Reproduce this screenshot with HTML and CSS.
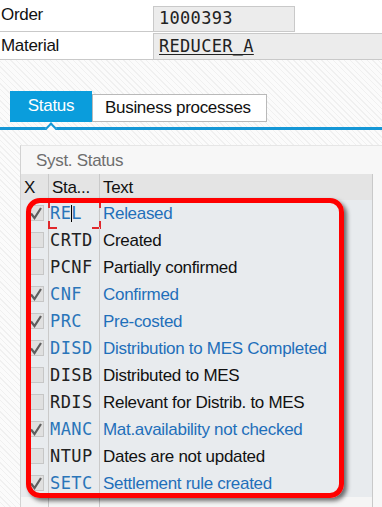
FILE: index.html
```
<!DOCTYPE html>
<html lang="en">
<head>
  <meta charset="UTF-8">
  <meta name="viewport" content="width=device-width, initial-scale=1.0">
  <title>Order Status</title>
  <link rel="stylesheet" href="styles.css">
</head>
<body>
  <div class="fields">
    <div class="field-row">
      <label class="field-label">Order</label>
      <div class="field-value short">1000393</div>
    </div>
    <div class="field-row wide">
      <label class="field-label">Material</label>
      <div class="field-value long"><u>REDUCER_A</u></div>
    </div>
  </div>

  <div class="stage">
    <div class="tabs">
      <div class="tab active">Status</div>
      <div class="tab">Business processes</div>
    </div>
    <div class="tab-line"></div>

    <div class="panel">
      <div class="panel-title">Syst. Status</div>
      <div class="grid">
        <div class="grid-head">
          <div class="cell">X</div>
          <div class="cell">Sta...</div>
          <div class="cell">Text</div>
        </div>
        <div id="rows"></div>
        <div class="grid-fill">
          <div class="cell"></div>
          <div class="cell"></div>
          <div class="cell"></div>
        </div>
        <div class="highlight"></div>
      </div>
    </div>
  </div>

  <script>
    const statuses = [
      ['REL', 'Released', true],
      ['CRTD', 'Created', false],
      ['PCNF', 'Partially confirmed', false],
      ['CNF', 'Confirmed', true],
      ['PRC', 'Pre-costed', true],
      ['DISD', 'Distribution to MES Completed', true],
      ['DISB', 'Distributed to MES', false],
      ['RDIS', 'Relevant for Distrib. to MES', false],
      ['MANC', 'Mat.availability not checked', true],
      ['NTUP', 'Dates are not updated', false],
      ['SETC', 'Settlement rule created', true]
    ];

    const tick = '<svg width="14" height="14" viewBox="0 0 14 14"><path d="M2 7.5 L5.5 12 L12 2" fill="none" stroke="#5e5e5e" stroke-width="2.2"/></svg>';
    const focus = '<svg class="focus" width="53" height="29" viewBox="0 0 53 29">' +
      '<path d="M1 8 V1 H8 M45 1 H52 V8 M1 21 V28 H9 M44 28 H52 V21" fill="none" stroke="#e0282c" stroke-width="2"/></svg>' +
      '<span class="caret"></span>';

    const rows = document.getElementById('rows');
    statuses.forEach(([code, text, active], i) => {
      const row = document.createElement('div');
      row.className = 'grid-row' + (active ? ' on' : '');
      row.innerHTML =
        '<div class="cell"><span class="check">' + (active ? tick : '') + '</span></div>' +
        '<div class="cell code">' + code + (i === 0 ? focus : '') + '</div>' +
        '<div class="cell">' + text + '</div>';
      rows.appendChild(row);
    });
  </script>
</body>
</html>
```

FILE: styles.css
```
* {
  box-sizing: border-box;
}
body {
  margin: 0;
  font-family: 'Liberation Sans', Arial, sans-serif;
  font-size: 17px;
  letter-spacing: -0.3px;
  color: #111;
  background: #fff;
  height: 507px;
  overflow: hidden;
}
.fields {
  background: #fff;
}
.field-row {
  display: flex;
  height: 32px;
}
.field-label {
  width: 153px;
  padding-left: 1px;
  line-height: 30px;
  border-bottom: 1px solid #c9c9c9;
}
.field-value {
  background: #ececec;
  border: 1px solid #c9c9c9;
  font-family: 'DejaVu Sans Mono', monospace;
  font-size: 17px;
  letter-spacing: 0.3px;
  color: #222;
  padding-left: 5px;
}
.field-value.short {
  width: 142px;
  margin-top: 6px;
  line-height: 23px;
}
.field-row.wide {
  height: 28px;
  border-bottom: 1px solid #c9c9c9;
}
.field-row.wide .field-label {
  border-bottom: none;
  line-height: 27px;
}
.field-value.long {
  flex: 1;
  margin-top: 1px;
  border-right: none;
  border-bottom: none;
  line-height: 25px;
}
.field-value u {
  text-underline-offset: 2px;
  text-decoration-skip-ink: none;
}
.stage {
  height: 447px;
  overflow: hidden;
  background: repeating-linear-gradient(45deg, #fbfbfb 0 3px, #f0f0f0 3px 4px);
  padding-top: 32px;
}
.tabs {
  display: flex;
  align-items: flex-end;
  padding-left: 10px;
  height: 30px;
}
.tab {
  height: 28px;
  line-height: 26px;
  padding: 0 15px 0 12px;
  background: #fff;
  border: 1px solid #b9b9b9;
}
.tab.active {
  height: 31px;
  line-height: 30px;
  width: 82px;
  padding: 0;
  text-align: center;
  background: #0a9ddc;
  border: none;
  color: #fff;
}
.tab-line {
  position: relative;
  margin-top: 5px;
  height: 3px;
  background: #1597d6;
}
.tab-line::after {
  content: '';
  position: absolute;
  left: 47px;
  top: -3px;
  width: 6px;
  height: 6px;
  background: #fbfbfb;
  border-left: 2px solid #1597d6;
  border-top: 2px solid #1597d6;
  transform: rotate(45deg);
}
.panel {
  margin: 15px 0 0 20px;
  height: 362px;
  background: #f7f7f7;
  border-left: 1px solid #d2d2d2;
  border-top: 1px solid #e6e6e6;
}
.panel-title {
  height: 28px;
  line-height: 30px;
  padding-left: 15px;
  color: #6e6e6e;
}
.grid {
  position: relative;
  width: 352px;
  border-right: 1px solid #c9c9c9;
}
.grid-head,
.grid-row,
.grid-fill {
  display: grid;
  grid-template-columns: 28px 51px 1fr;
}
.grid-head {
  height: 26px;
  line-height: 27px;
  background: #e4e4e4;
}
.grid-head .cell {
  padding-left: 3px;
}
.cell {
  border-right: 1px solid #cacaca;
  white-space: nowrap;
  overflow: hidden;
}
.cell:last-child {
  border-right: none;
}
.grid-row {
  height: 27px;
  line-height: 27px;
  background: #e8ebee;
}
.grid-row .cell:nth-child(3) {
  padding-left: 3px;
}
.grid-row.on {
  color: #1f6fba;
}
.grid-fill {
  height: 10px;
  background: #f5f5f5;
}
.code {
  position: relative;
  overflow: visible;
  padding-left: 1px;
  font-family: 'DejaVu Sans Mono', monospace;
  font-size: 17px;
  letter-spacing: 0.4px;
  color: #222;
}
.on .code {
  color: #2a75b9;
}
.check {
  display: flex;
  align-items: center;
  justify-content: center;
  width: 16px;
  height: 16px;
  margin: 5px 0 0 7px;
  background: #e0e0e0;
  border: 1px solid #c6c6c6;
}
.focus {
  position: absolute;
  left: -1px;
  top: 0;
}
.caret {
  position: absolute;
  left: 22px;
  top: 5px;
  width: 1px;
  height: 17px;
  background: #000;
}
.highlight {
  position: absolute;
  left: 5px;
  top: 24px;
  width: 318px;
  height: 300px;
  border: 5px solid #ff0000;
  border-radius: 14px;
  box-shadow: 3px 3px 4px rgba(0, 0, 0, 0.55);
}
```
